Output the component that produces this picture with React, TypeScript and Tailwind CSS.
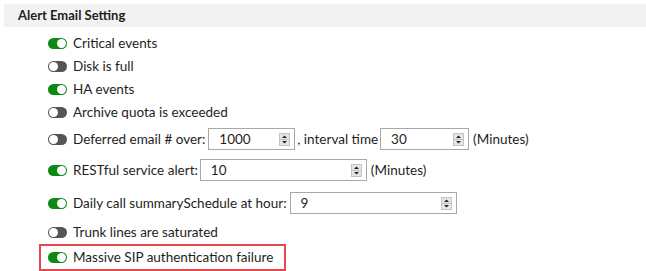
import React from 'react'

function Toggle({ on }: { on: boolean }) {
  return (
    <span
      className={`relative inline-block w-[19px] h-[11px] rounded-full shrink-0 ${on ? 'bg-[#0b8a12]' : 'bg-[#555555]'}`}
    >
      <span
        className={`absolute top-[1px] w-[9px] h-[9px] rounded-full bg-white ${on ? 'right-[1px]' : 'left-[1px]'}`}
      />
    </span>
  )
}

function Spinner() {
  return (
    <svg width="11" height="13" viewBox="0 0 11 13" className="shrink-0">
      <rect x="0.5" y="0.5" width="10" height="12" fill="#e6e6e6" stroke="#c4c4c4" />
      <line x1="1" y1="6.5" x2="10" y2="6.5" stroke="#c4c4c4" />
      <path d="M3 5 L5.5 2.5 L8 5 Z" fill="#222" />
      <path d="M3 8 L5.5 10.5 L8 8 Z" fill="#222" />
    </svg>
  )
}

function NumberBox({ value, width }: { value: string; width: string }) {
  return (
    <span className={`inline-flex items-center justify-between h-[22px] border border-[#a8a8a8] bg-white pl-[10px] pr-[4px] ${width}`}>
      <span>{value}</span>
      <Spinner />
    </span>
  )
}

function Row({ on, h, children }: { on: boolean; h: string; children: React.ReactNode }) {
  return (
    <div className={`flex items-center gap-[6px] pl-[48px] ${h}`}>
      <Toggle on={on} />
      <div className="flex items-center">{children}</div>
    </div>
  )
}

export default function App() {
  return (
    <div
      className="w-[646px] h-[271px] bg-white text-[#1e1e1e] text-[13.5px] overflow-hidden"
      style={{ fontFamily: 'Lato, "Open Sans", sans-serif' }}
    >
      <div className="pt-[4px] pl-[4px]">
        <div className="h-[23px] bg-[#f2f2f2] flex items-center pl-[14px] font-bold text-[13px]">Alert Email Setting</div>
      </div>
      <div className="pt-[5px]">
        <Row on h="h-[23px]">Critical events</Row>
        <Row on={false} h="h-[23px]">Disk is full</Row>
        <Row on h="h-[23px]">HA events</Row>
        <Row on={false} h="h-[23px]">Archive quota is exceeded</Row>
        <Row on={false} h="h-[30px]">
          <span className="mr-[3px]">Deferred email # over:</span>
          <NumberBox value="1000" width="w-[87px]" />
          <span className="ml-[2px] mr-[2px]">, interval time</span>
          <NumberBox value="30" width="w-[89px]" />
          <span className="ml-[4px]">(Minutes)</span>
        </Row>
        <Row on h="h-[32px]">
          <span className="mr-[2px]">RESTful service alert:</span>
          <NumberBox value="10" width="w-[167px]" />
          <span className="ml-[4px]">(Minutes)</span>
        </Row>
        <Row on h="h-[34px]">
          <span className="mr-[3px]">Daily call summarySchedule at hour:</span>
          <NumberBox value="9" width="w-[167px]" />
        </Row>
        <Row on={false} h="h-[24px]">Trunk lines are saturated</Row>
        <div className="pl-[39px] h-[27px] flex">
          <div className="flex items-center gap-[6px] pl-[7px] pr-[11px] border-2 border-[#e5484d] h-[27px]">
            <Toggle on />
            <span>Massive SIP authentication failure</span>
          </div>
        </div>
      </div>
    </div>
  )
}
